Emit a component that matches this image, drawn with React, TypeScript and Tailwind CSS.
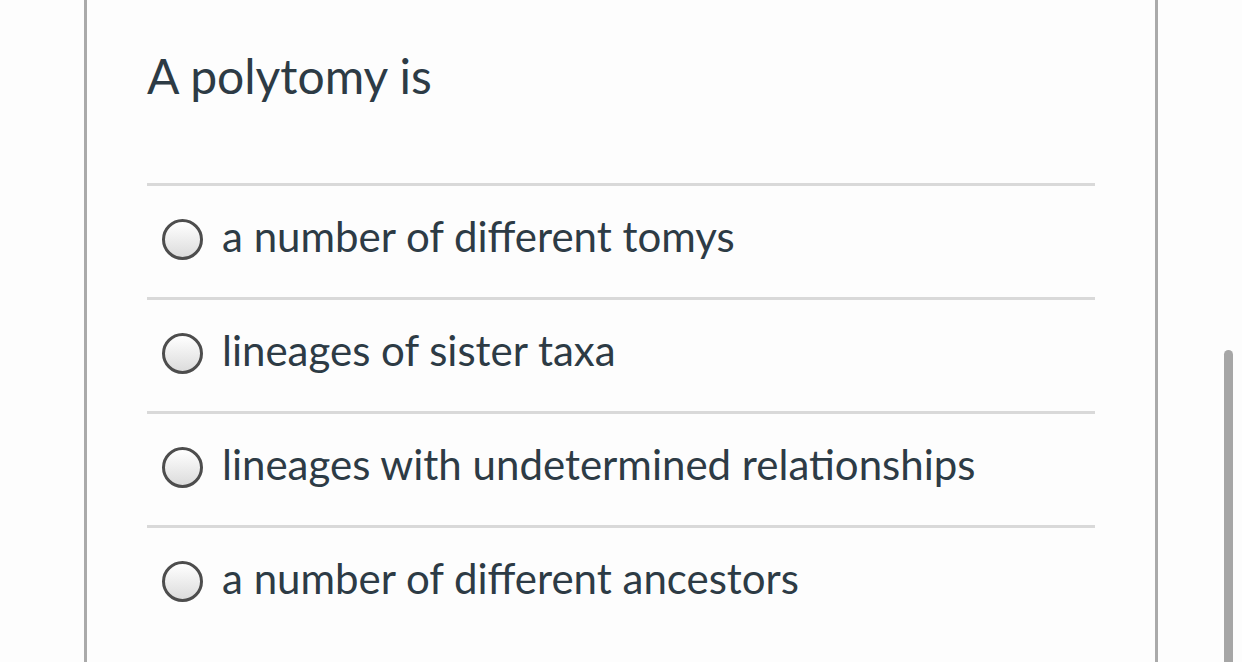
import React from 'react';

const answers = [
  'a number of different tomys',
  'lineages of sister taxa',
  'lineages with undetermined relationships',
  'a number of different ancestors',
];

export default function App() {
  return (
    <div className="relative h-[662px] w-[1242px] overflow-hidden bg-[#fdfdfd] font-['Lato','Liberation_Sans',sans-serif] text-[#2d3b45]">
      <div className="ml-[84px] h-full w-[1074px] border-x-[3px] border-[#aaaaaa] px-[60px]">
        {/* Question */}
        <div className="h-[183px] pt-[52px]">
          <h1 className="text-[48px] leading-none font-normal">A polytomy is</h1>
        </div>

        {/* Answers */}
        <div>
          {answers.map((answer, i) => (
            <label key={i} className="flex h-[114px] items-start border-t-[3px] border-[#d9d9d9] pt-[33px] pl-[15px]">
              <span className="h-[41px] w-[41px] shrink-0 rounded-full border-[3px] border-[#4d4d4d] bg-linear-to-b from-white to-[#dcdcdc]" />
              <span className="ml-[19px] -mt-[4px] text-[42px] leading-none">{answer}</span>
            </label>
          ))}
        </div>
      </div>

      {/* Scrollbar thumb */}
      <div className="absolute top-[350px] left-[1224px] h-[320px] w-[9px] rounded-t-full bg-[#a6a6a6]" />
    </div>
  );
}
